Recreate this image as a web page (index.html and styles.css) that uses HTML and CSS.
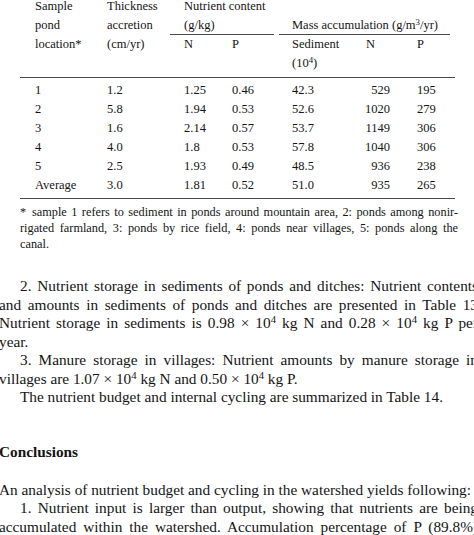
FILE: index.html
```html
<!DOCTYPE html>
<html lang="en">
<head>
<meta charset="utf-8">
<title>Nutrient storage in sediments</title>
<link rel="stylesheet" href="styles.css">
</head>
<body>
<div class="page">
  <div class="tbl">
    <div class="grid thead">
      <div class="c1">Sample</div>
      <div>Thickness</div>
      <div class="nt">Nutrient content</div>

      <div class="c1">pond</div>
      <div>accretion</div>
      <div class="ns">(g/kg)</div>
      <div class="ms">Mass accumulation (g/m<sup>3</sup>/yr)</div>

      <div class="c1">location*</div>
      <div>(cm/yr)</div>
      <div>N</div>
      <div>P</div>
      <div>Sediment</div>
      <div class="hn">N</div>
      <div class="p7">P</div>

      <div class="c5">(10<sup>4</sup>)</div>
    </div>
    <div class="grid tbody">
      <div>1</div><div>1.2</div><div>1.25</div><div>0.46</div><div>42.3</div><div class="r">529</div><div class="p7">195</div>
      <div>2</div><div>5.8</div><div>1.94</div><div>0.53</div><div>52.6</div><div class="r">1020</div><div class="p7">279</div>
      <div>3</div><div>1.6</div><div>2.14</div><div>0.57</div><div>53.7</div><div class="r">1149</div><div class="p7">306</div>
      <div>4</div><div>4.0</div><div>1.8</div><div>0.53</div><div>57.8</div><div class="r">1040</div><div class="p7">306</div>
      <div>5</div><div>2.5</div><div>1.93</div><div>0.49</div><div>48.5</div><div class="r">936</div><div class="p7">238</div>
      <div>Average</div><div>3.0</div><div>1.81</div><div>0.52</div><div>51.0</div><div class="r">935</div><div class="p7">265</div>
    </div>
  </div>

  <div class="fn">
    <div class="j"><span class="ast">*</span>sample 1 refers to sediment in ponds around mountain area, 2: ponds among nonir-</div>
    <div class="j">rigated farmland, 3: ponds by rice field, 4: ponds near villages, 5: ponds along the</div>
    <div>canal.</div>
  </div>

  <div class="txt first">
    <div class="j ind">2. Nutrient storage in sediments of ponds and ditches: Nutrient contents</div>
    <div class="j">and amounts in sediments of ponds and ditches are presented in Table 13</div>
    <div class="j">Nutrient storage in sediments is 0.98 × 10<sup>4</sup> kg N and 0.28 × 10<sup>4</sup> kg P per</div>
    <div>year.</div>
    <div class="j ind">3. Manure storage in villages: Nutrient amounts by manure storage in</div>
    <div>villages are 1.07 × 10<sup>4</sup> kg N and 0.50 × 10<sup>4</sup> kg P.</div>
    <div class="ind">The nutrient budget and internal cycling are summarized in Table 14.</div>
  </div>

  <h2 class="txt head">Conclusions</h2>

  <div class="txt after">
    <div>An analysis of nutrient budget and cycling in the watershed yields following:</div>
    <div class="j ind">1. Nutrient input is larger than output, showing that nutrients are being</div>
    <div class="j">accumulated within the watershed. Accumulation percentage of P (89.8%)</div>
  </div>
</div>
</body>
</html>
```

FILE: styles.css
```css
* {
  box-sizing: border-box;
}

html,
body {
  margin: 0;
  padding: 0;
  background: #ffffff;
}

body {
  width: 474px;
  height: 535px;
  overflow: hidden;
  font-family: "Liberation Serif", "Times New Roman", serif;
  color: #141414;
}

.page {
  width: 474px;
}

.tbl {
  margin-top: -3px;
}

.grid {
  display: grid;
  grid-template-columns: 72px 77px 48px 60px 48px 50px 65px;
  grid-auto-rows: 19px;
  margin-left: 20px;
  width: 435px;
  padding-left: 15px;
  font-size: 12.5px;
  line-height: 19px;
}

.thead {
  padding-bottom: 4px;
  border-bottom: 1px solid #4a4a4a;
}

.tbody {
  padding-top: 3px;
  padding-bottom: 3px;
  border-bottom: 1px solid #4a4a4a;
}

.c1 {
  grid-column-start: 1;
}

.c5 {
  grid-column-start: 5;
}

.nt {
  grid-column: 3 / span 2;
  white-space: nowrap;
}

.ns {
  grid-column: 3 / span 2;
  margin-left: -14px;
  padding-left: 14px;
  margin-right: 18px;
  border-bottom: 1px solid #4a4a4a;
}

.ms {
  grid-column: 5 / span 3;
  margin-left: -13px;
  padding-left: 13px;
  margin-right: 5px;
  border-bottom: 1px solid #4a4a4a;
  white-space: nowrap;
}

.r {
  text-align: right;
}

.hn {
  padding-left: 26px;
}

.p7 {
  padding-left: 27px;
}

sup {
  font-size: 70%;
  line-height: 0;
  vertical-align: 0.45em;
}

.fn {
  margin: 5px 0 0 20px;
  width: 438px;
  font-size: 12.3px;
  line-height: 16px;
}

.ast {
  display: inline-block;
  width: 12px;
}

.j {
  text-align: justify;
  text-align-last: justify;
}

.txt {
  margin-left: -1px;
  width: 479px;
  font-size: 15.3px;
  line-height: 18.5px;
}

.ind {
  padding-left: 21px;
}

.first {
  margin-top: 25px;
}

.head {
  margin-top: 36px;
  margin-bottom: 0;
  font-weight: bold;
  font-size: 15.3px;
  line-height: 18.5px;
}

.after {
  margin-top: 19.5px;
}
```
